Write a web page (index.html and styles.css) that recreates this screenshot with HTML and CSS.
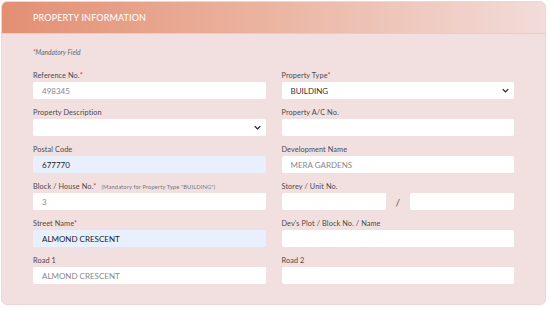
FILE: index.html
```html
<!DOCTYPE html>
<html lang="en">
<head>
  <meta charset="UTF-8" />
  <meta name="viewport" content="width=device-width, initial-scale=1.0"/>
  <title>Property Information</title>
  <link rel="stylesheet" href="styles.css">
</head>
<body>
  <!-- Property information panel -->
  <div class="panel">
    <div class="panel-header">PROPERTY INFORMATION</div>

    <div class="panel-body">
      <p class="mandatory"><span class="req">*</span>Mandatory Field</p>

      <div class="form-grid">
        <div class="field">
          <label for="refno">Reference No.<span class="req">*</span></label>
          <input type="text" id="refno" class="muted" value="498345">
        </div>
        <div class="field">
          <label for="ptype">Property Type<span class="req">*</span></label>
          <div class="select-wrap">
            <select id="ptype">
              <option>BUILDING</option>
              <option>LAND</option>
            </select>
            <svg class="chevron" viewBox="0 0 10 6"><path d="M1 1l4 4 4-4" fill="none" stroke="#222" stroke-width="1.8"/></svg>
          </div>
        </div>

        <div class="field">
          <label for="pdesc">Property Description</label>
          <div class="select-wrap">
            <select id="pdesc">
              <option></option>
            </select>
            <svg class="chevron" viewBox="0 0 10 6"><path d="M1 1l4 4 4-4" fill="none" stroke="#222" stroke-width="1.8"/></svg>
          </div>
        </div>
        <div class="field">
          <label for="acno">Property A/C No.</label>
          <input type="text" id="acno">
        </div>

        <div class="field">
          <label for="postal">Postal Code</label>
          <input type="text" id="postal" class="filled" value="677770">
        </div>
        <div class="field">
          <label for="devname">Development Name</label>
          <input type="text" id="devname" class="muted" value="MERA GARDENS">
        </div>

        <div class="field">
          <label for="block">Block / House No.<span class="req">*</span> <span class="note">(Mandatory for Property Type "BUILDING")</span></label>
          <input type="text" id="block" class="muted" value="3">
        </div>
        <div class="field">
          <label for="storey">Storey / Unit No.</label>
          <div class="unit-row">
            <input type="text" id="storey">
            <span class="slash">/</span>
            <input type="text" id="unit">
          </div>
        </div>

        <div class="field">
          <label for="street">Street Name<span class="req">*</span></label>
          <input type="text" id="street" class="filled" value="ALMOND CRESCENT">
        </div>
        <div class="field">
          <label for="plot">Dev's Plot / Block No. / Name</label>
          <input type="text" id="plot">
        </div>

        <div class="field">
          <label for="road1">Road 1</label>
          <input type="text" id="road1" class="muted" value="ALMOND CRESCENT">
        </div>
        <div class="field">
          <label for="road2">Road 2</label>
          <input type="text" id="road2">
        </div>
      </div>
    </div>
  </div>
</body>
</html>
```

FILE: styles.css
```css
body {
  font-family: 'Lato', 'Open Sans', sans-serif;
  background-color: #fff;
  margin: 0;
  padding: 1px;
}

.panel {
  width: 545px;
  background-color: #f2e0e0;
  border: 1px solid #ecd6d6;
  border-radius: 6px;
  box-sizing: border-box;
  overflow: hidden;
}

.panel-header {
  height: 31px;
  line-height: 31px;
  padding-left: 31px;
  color: #fff;
  font-size: 9px;
  letter-spacing: 0.15px;
  background: linear-gradient(to right, #e38f73 0%, #ebb5a2 50%, #f2dcd9 100%);
  border-bottom: 1px solid #eccbc4;
}

.panel-body {
  padding: 14px 31px 20px 31px;
}

.mandatory {
  margin: 0 0 17px 0;
  font-size: 6.6px;
  line-height: 8px;
  font-style: italic;
  color: #666;
}

.req {
  color: #e0343b;
}

.form-grid {
  display: grid;
  grid-template-columns: 1fr 1fr;
  column-gap: 16px;
  row-gap: 11px;
}

.field label {
  display: block;
  height: 9px;
  line-height: 6px;
  font-size: 7.3px;
  color: #4a4a4a;
  letter-spacing: 0.1px;
}

.note {
  font-size: 5.8px;
  color: #777;
  margin-left: 3px;
}

input, select {
  display: block;
  width: 100%;
  height: 17px;
  padding: 0 9px;
  margin: 0;
  border: none;
  border-radius: 2px;
  background-color: #fff;
  box-sizing: border-box;
  font-family: inherit;
  font-size: 8px;
  color: #333;
  outline: none;
}

select {
  appearance: none;
  -webkit-appearance: none;
}

input.muted {
  color: #888;
}

input.filled {
  background-color: #e8f0fe;
  color: #222;
}

.select-wrap {
  position: relative;
}

.chevron {
  position: absolute;
  right: 5px;
  top: 6px;
  width: 7px;
  height: 5px;
}

.unit-row {
  display: flex;
  align-items: center;
}

.unit-row input {
  flex: 1;
}

.slash {
  width: 24px;
  text-align: center;
  font-size: 10px;
  color: #555;
}
```
